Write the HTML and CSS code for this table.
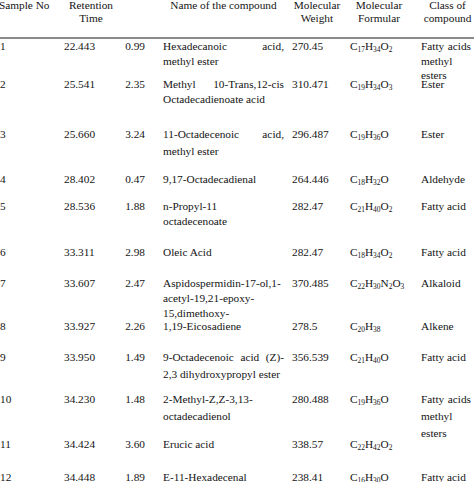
FILE: index.html
```html
<!DOCTYPE html>
<html>
<head>
<meta charset="utf-8">
<link rel="stylesheet" href="styles.css">
</head>
<body>
<div class="table">
  <div class="head">
    <div class="h-sample">Sample No</div>
    <div class="h-ret">Retention<br>Time</div>
    <div class="h-sp"></div>
    <div class="h-name">Name of the compound</div>
    <div class="h-sp"></div>
    <div class="h-wt">Molecular<br>Weight</div>
    <div class="h-sp"></div>
    <div class="h-form">Molecular<br>Formular</div>
    <div class="h-sp"></div>
    <div class="h-cls">Class of<br>compound</div>
  </div>

  <div class="row r1">
    <div>1</div><div>22.443</div><div class="area">0.99</div><div></div>
    <div><span class="ln just">Hexadecanoic acid,</span><span class="ln">methyl ester</span></div><div></div>
    <div>270.45</div>
    <div>C<sub>17</sub>H<sub>34</sub>O<sub>2</sub></div>
    <div class="cls"><span class="ln just">Fatty acids</span><span class="ln">methyl</span><span class="ln">esters</span></div>
  </div>

  <div class="row r2">
    <div>2</div><div>25.541</div><div class="area">2.35</div><div></div>
    <div><span class="ln just">Methyl 10-Trans,12-cis</span><span class="ln">Octadecadienoate acid</span></div><div></div>
    <div>310.471</div>
    <div>C<sub>19</sub>H<sub>34</sub>O<sub>3</sub></div>
    <div class="cls">Ester</div>
  </div>

  <div class="row r3">
    <div>3</div><div>25.660</div><div class="area">3.24</div><div></div>
    <div><span class="ln just">11-Octadecenoic acid,</span><span class="ln">methyl ester</span></div><div></div>
    <div>296.487</div>
    <div>C<sub>19</sub>H<sub>36</sub>O</div>
    <div class="cls">Ester</div>
  </div>

  <div class="row r4">
    <div>4</div><div>28.402</div><div class="area">0.47</div><div></div>
    <div>9,17-Octadecadienal</div><div></div>
    <div>264.446</div>
    <div>C<sub>18</sub>H<sub>32</sub>O</div>
    <div class="cls">Aldehyde</div>
  </div>

  <div class="row r5">
    <div>5</div><div>28.536</div><div class="area">1.88</div><div></div>
    <div><span class="ln">n-Propyl-11</span><span class="ln">octadecenoate</span></div><div></div>
    <div>282.47</div>
    <div>C<sub>21</sub>H<sub>40</sub>O<sub>2</sub></div>
    <div class="cls">Fatty acid</div>
  </div>

  <div class="row r6">
    <div>6</div><div>33.311</div><div class="area">2.98</div><div></div>
    <div>Oleic Acid</div><div></div>
    <div>282.47</div>
    <div>C<sub>18</sub>H<sub>34</sub>O<sub>2</sub></div>
    <div class="cls">Fatty acid</div>
  </div>

  <div class="row r7">
    <div>7</div><div>33.607</div><div class="area">2.47</div><div></div>
    <div><span class="ln">Aspidospermidin-17-ol,1-</span><span class="ln">acetyl-19,21-epoxy-</span><span class="ln">15,dimethoxy-</span></div><div></div>
    <div>370.485</div>
    <div>C<sub>22</sub>H<sub>30</sub>N<sub>2</sub>O<sub>3</sub></div>
    <div class="cls">Alkaloid</div>
  </div>

  <div class="row r8">
    <div>8</div><div>33.927</div><div class="area">2.26</div><div></div>
    <div>1,19-Eicosadiene</div><div></div>
    <div>278.5</div>
    <div>C<sub>20</sub>H<sub>38</sub></div>
    <div class="cls">Alkene</div>
  </div>

  <div class="row r9">
    <div>9</div><div>33.950</div><div class="area">1.49</div><div></div>
    <div><span class="ln just">9-Octadecenoic acid (Z)-</span><span class="ln">2,3 dihydroxypropyl ester</span></div><div></div>
    <div>356.539</div>
    <div>C<sub>21</sub>H<sub>40</sub>O</div>
    <div class="cls">Fatty acid</div>
  </div>

  <div class="row r10">
    <div>10</div><div>34.230</div><div class="area">1.48</div><div></div>
    <div><span class="ln">2-Methyl-Z,Z-3,13-</span><span class="ln">octadecadienol</span></div><div></div>
    <div>280.488</div>
    <div>C<sub>19</sub>H<sub>36</sub>O</div>
    <div class="cls"><span class="ln just">Fatty acids</span><span class="ln">methyl</span><span class="ln">esters</span></div>
  </div>

  <div class="row r11">
    <div>11</div><div>34.424</div><div class="area">3.60</div><div></div>
    <div>Erucic acid</div><div></div>
    <div>338.57</div>
    <div>C<sub>22</sub>H<sub>42</sub>O<sub>2</sub></div>
    <div class="cls"></div>
  </div>

  <div class="row r12">
    <div>12</div><div>34.448</div><div class="area">1.89</div><div></div>
    <div>E-11-Hexadecenal</div><div></div>
    <div>238.41</div>
    <div>C<sub>16</sub>H<sub>30</sub>O</div>
    <div class="cls">Fatty acid</div>
  </div>
</div>
</body>
</html>
```

FILE: styles.css
```css
html, body {
  margin: 0;
  padding: 0;
  background: #ffffff;
}

body {
  font-family: "Liberation Serif", "Times New Roman", serif;
  font-size: 11.3px;
  color: #141414;
  overflow: hidden;
}

.table {
  width: 474px;
}

.head {
  display: grid;
  grid-template-columns: 64px 54px 45px 121px 8px 50px 8px 58px 13px 53px;
  height: 37px;
  line-height: 13px;
  border-bottom: 2px solid #8a8a8a;
  white-space: nowrap;
}

.head > div {
  margin-top: -1px;
}

.h-sample {
  margin-left: -1px;
}

.h-ret,
.h-name,
.h-wt,
.h-form,
.h-cls {
  text-align: center;
}

.row {
  display: grid;
  grid-template-columns: 64px 61px 20px 18px 121px 8px 58px 71px 50px;
  line-height: 16px;
  white-space: nowrap;
}

.row > div {
  min-width: 0;
}

.area {
  text-align: right;
}

.ln {
  display: block;
}

.just {
  text-align: justify;
  text-align-last: justify;
  white-space: normal;
}

sub {
  font-size: 7.4px;
  line-height: 0;
  vertical-align: -1.5px;
}

.r1 { height: 38px; line-height: 14.5px; }
.r2 { height: 49px; line-height: 15px; }
.r3 { height: 45px; line-height: 17px; }
.r4 { height: 28px; }
.r5 { height: 45px; line-height: 15px; }
.r6 { height: 32px; }
.r7 { height: 42px; line-height: 15px; }
.r8 { height: 31px; }
.r9 { height: 42px; line-height: 17px; }
.r10 { height: 45px; line-height: 17px; }
.r11 { height: 33px; }
.r12 { height: 30px; }
```
